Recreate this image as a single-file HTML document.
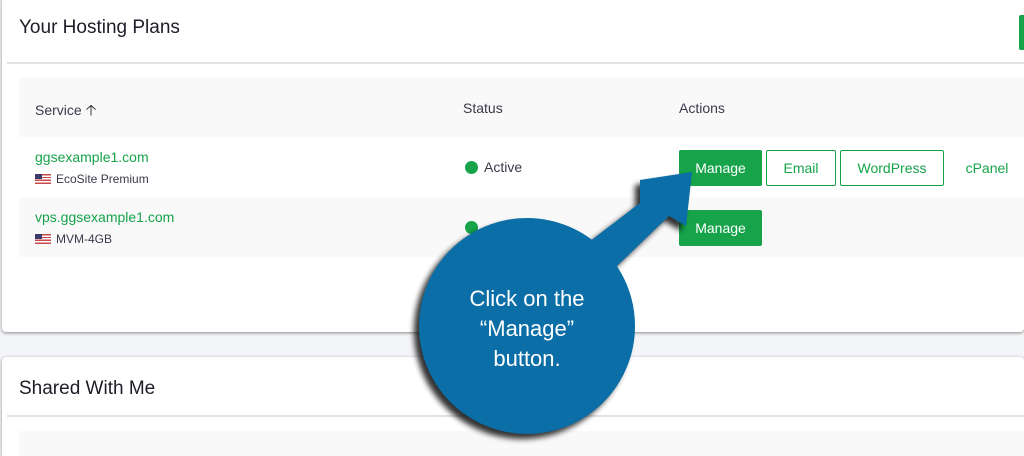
<!DOCTYPE html>
<html style="width:1024px;height:456px;overflow:hidden"><head><meta charset="utf-8"><style>
*{box-sizing:border-box;margin:0;padding:0}
body{width:1024px;height:456px;overflow:hidden;background:#f4f5f8;font-family:"Liberation Sans",Arial,sans-serif;position:relative}
.card{position:absolute;left:2px;width:1022px;background:#fff;border-radius:4px;box-shadow:0 1px 3px rgba(0,0,0,.45);overflow:hidden}
.h{position:absolute;left:17px;font-size:19px;color:#1d1d28}
.line{position:absolute;left:5px;right:0;height:2px;background:#e2e2e2}
.gray{position:absolute;left:17px;right:0;background:#f9f9f9}
.t{position:absolute;font-size:14px;color:#3a3a4a}
.lnk{position:absolute;font-size:14px;color:#16a34a}
.sub{position:absolute;font-size:12px;color:#3a3a4a}
.flag{display:inline-block;width:16px;height:10px;vertical-align:-1px;margin-right:5px;background:repeating-linear-gradient(#c94a4a 0 1.4px,#fff 1.4px 2.8px);position:relative}
.flag:before{content:"";position:absolute;left:0;top:0;width:7px;height:5px;background:#3c3b6e}
.dot{position:absolute;width:13px;height:13px;border-radius:50%;background:#16a34a}
.btn{position:absolute;height:36px;font-size:14px;display:flex;align-items:center;justify-content:center;border-radius:2px}
.fill{background:#16a34a;color:#fff}
.out{border:1.5px solid #16a34a;color:#16a34a;background:#fff}
</style></head><body>
<div class="card" style="top:-4px;height:336px">
<div class="h" style="top:21px">Your Hosting Plans</div>
<div class="line" style="top:66px"></div>
<div class="gray" style="top:82px;height:59px"></div>
<div class="gray" style="top:202px;height:59px"></div>
</div>
<div style="position:absolute;left:1019px;top:15px;width:5px;height:35px;background:#16a34a;border-radius:2px 0 0 2px"></div>
<div class="t" style="left:35px;top:100px">Service <span style="font-size:15px;color:#222">&#129121;</span></div>
<div class="t" style="left:463px;top:100px">Status</div>
<div class="t" style="left:679px;top:100px">Actions</div>
<div class="lnk" style="left:35px;top:149px">ggsexample1.com</div>
<div class="sub" style="left:35px;top:172px"><span class="flag"></span>EcoSite Premium</div>
<div class="lnk" style="left:35px;top:209px">vps.ggsexample1.com</div>
<div class="sub" style="left:35px;top:232px"><span class="flag"></span>MVM-4GB</div>
<div class="dot" style="left:465px;top:161px"></div><div class="t" style="left:484px;top:159px">Active</div>
<div class="dot" style="left:465px;top:221px"></div>
<div class="btn fill" style="left:679px;top:150px;width:83px">Manage</div>
<div class="btn out" style="left:766px;top:150px;width:70px">Email</div>
<div class="btn out" style="left:840px;top:150px;width:104px">WordPress</div>
<div class="btn" style="left:950px;top:150px;width:74px;color:#16a34a">cPanel</div>
<div class="btn fill" style="left:679px;top:210px;width:83px">Manage</div>
<div class="card" style="top:357px;height:99px;border-radius:4px 4px 0 0">
<div class="h" style="top:21px">Shared With Me</div>
<div class="line" style="top:58px"></div>
<div class="gray" style="top:74px;height:25px"></div>
</div>
<svg style="position:absolute;left:0;top:0" width="1024" height="456">
<defs><filter id="s" x="-30%" y="-30%" width="160%" height="160%"><feGaussianBlur stdDeviation="3"/></filter></defs>
<g transform="translate(-5,5)" filter="url(#s)" fill="#000" opacity=".8">
<ellipse cx="527" cy="326" rx="108" ry="108"/>
<polygon points="585,245 640,203 640,180 692,172 686,226 669,216 617,266"/>
</g>
<polygon points="585,245 640,203 640,180 692,172 686,226 669,216 617,266" fill="#0b6ea6"/>
<ellipse cx="527" cy="326" rx="108" ry="108" fill="#0b6ea6"/>
<g fill="#fff" font-family="Liberation Sans,Arial,sans-serif" font-size="22" text-anchor="middle">
<text x="527" y="306">Click on the</text>
<text x="527" y="336">“Manage”</text>
<text x="527" y="366">button.</text>
</g>
</svg>
</body></html>
